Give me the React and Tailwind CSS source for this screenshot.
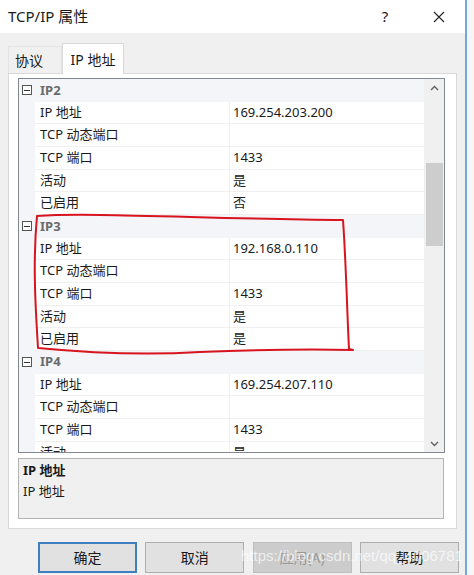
import React from 'react'

const FONT = { fontFamily: '"Noto Sans", "Noto Sans CJK SC", sans-serif' }

const groups = [
  {
    name: 'IP2',
    rows: [
      ['IP 地址', '169.254.203.200'],
      ['TCP 动态端口', ''],
      ['TCP 端口', '1433'],
      ['活动', '是'],
      ['已启用', '否'],
    ],
  },
  {
    name: 'IP3',
    rows: [
      ['IP 地址', '192.168.0.110'],
      ['TCP 动态端口', ''],
      ['TCP 端口', '1433'],
      ['活动', '是'],
      ['已启用', '是'],
    ],
  },
  {
    name: 'IP4',
    rows: [
      ['IP 地址', '169.254.207.110'],
      ['TCP 动态端口', ''],
      ['TCP 端口', '1433'],
      ['活动', '是'],
      ['已启用', '是'],
    ],
  },
]

// small boxed minus used by the property grid
const Collapse = () => (
  <div className="w-[10px] h-[10px] border border-[#555] bg-white flex items-center justify-center">
    <div className="w-[6px] h-px bg-[#333]" />
  </div>
)

const Category = ({ name }) => (
  <div className="flex h-[22.67px] bg-[#f3f5f9]">
    <div className="w-[16px] flex items-center justify-center">
      <Collapse />
    </div>
    <div className="pl-[5px] flex items-center text-[13px] font-bold text-[#6b6b6b]">{name}</div>
  </div>
)

const Row = ({ label, value }) => (
  <div className="flex h-[22.67px]">
    <div className="w-[16px] bg-[#f3f5f9]" />
    <div className="w-[195px] pl-[5px] flex items-center border-b border-[#f0f0f0] border-r text-[13px] text-[#1a1a1a]">
      {label}
    </div>
    <div className="flex-1 pl-[3px] flex items-center border-b border-[#f0f0f0] text-[13px] text-[#1a1a1a]">
      {value}
    </div>
  </div>
)

const Chevron = ({ down }) => (
  <svg width="9" height="6" viewBox="0 0 9 6" className={down ? 'rotate-180' : ''}>
    <path d="M1 5 L4.5 1.5 L8 5" fill="none" stroke="#606060" strokeWidth="1.4" />
  </svg>
)

const Button = ({ children, primary, disabled }) => (
  <div
    className={
      'w-[99px] h-[31px] flex items-center justify-center text-[14px] ' +
      (primary
        ? 'bg-[#e1e1e1] border-2 border-[#3d7fc0]'
        : disabled
        ? 'bg-[#cccccc] border border-[#bfbfbf] text-[#9a9a9a]'
        : 'bg-[#e1e1e1] border border-[#adadad]')
    }
  >
    {children}
  </div>
)

export default function App() {
  return (
    <div className="relative w-[474px] h-[575px] overflow-hidden flex bg-[#f6f6f6] text-[#1a1a1a]" style={FONT}>
      <div className="w-[467px] h-full flex flex-col border-r-2 border-[#74a6d8]">
        {/* title bar */}
        <div className="h-[33px] bg-white flex items-center pl-[8px] shrink-0">
          <div className="text-[15px] flex-1">TCP/IP 属性</div>
          <div className="text-[15px] w-[20px] text-center mr-[38px]">?</div>
          <svg width="12" height="12" viewBox="0 0 12 12" className="mr-[20px]">
            <path d="M1 1 L11 11 M11 1 L1 11" stroke="#222" strokeWidth="1.1" />
          </svg>
        </div>

        {/* dialog body */}
        <div className="flex-1 bg-[#f0f0f0] pt-[10px] pl-[8px]">
          <div className="flex items-end h-[30px]">
            <div className="w-[54px] h-[27px] border border-b-0 border-[#e3e3e3] pl-[6px] flex items-center text-[14px]">
              协议
            </div>
            <div className="relative z-10 -mb-px w-[62px] h-[31px] bg-white border border-b-0 border-[#d9d9d9] flex items-center justify-center text-[14px]">
              IP 地址
            </div>
          </div>

          <div className="w-[449px] h-[456px] bg-white border border-[#d9d9d9] pt-[4px] pl-[9px]">
            {/* property grid */}
            <div className="w-[427px] h-[375px] border border-[#828790] flex overflow-hidden">
              <div className="flex-1 overflow-hidden">
                {groups.map((g) => (
                  <div key={g.name}>
                    <Category name={g.name} />
                    {g.rows.map(([l, v]) => (
                      <Row key={l} label={l} value={v} />
                    ))}
                  </div>
                ))}
              </div>
              <div className="w-[20px] bg-[#f0f0f0] flex flex-col items-center">
                <div className="h-[17px] flex items-center justify-center">
                  <Chevron />
                </div>
                <div className="mt-[67px] w-[17px] h-[83px] bg-[#cdcdcd]" />
                <div className="flex-1" />
                <div className="h-[17px] flex items-center justify-center">
                  <Chevron down />
                </div>
              </div>
            </div>

            {/* description pane */}
            <div className="mt-[5px] w-[426px] h-[61px] bg-[#f0f0f0] border border-[#b4b4b4] px-[4px] pt-[1px]">
              <div className="text-[13px] font-bold leading-[21px]">IP 地址</div>
              <div className="text-[13px] leading-[21px]">IP 地址</div>
            </div>
          </div>

          <div className="mt-[13px] ml-[30px] flex gap-[8.3px]">
            <Button primary>确定</Button>
            <Button>取消</Button>
            <Button disabled>应用(A)</Button>
            <Button>帮助</Button>
          </div>
        </div>
      </div>

      {/* red hand-drawn annotation */}
      <svg className="absolute left-0 top-0 pointer-events-none" width="474" height="575">
        <path
          d="M37 216 C90 212 210 219 343 220 C346 262 347 310 349 349 L353 350 C300 349 250 350 200 352 C150 355 90 353 38 348 C35 300 33 260 37 216 Z"
          fill="none"
          stroke="#d8141f"
          strokeWidth="2"
          strokeLinejoin="round"
        />
      </svg>

      {/* watermark */}
      <div
        className="absolute left-[241px] top-[545px] text-[15px] text-white/70 whitespace-nowrap pointer-events-none"
        style={{ fontFamily: '"Liberation Sans", sans-serif' }}
      >
        https://blog.csdn.net/qq_4006781
      </div>
    </div>
  )
}
